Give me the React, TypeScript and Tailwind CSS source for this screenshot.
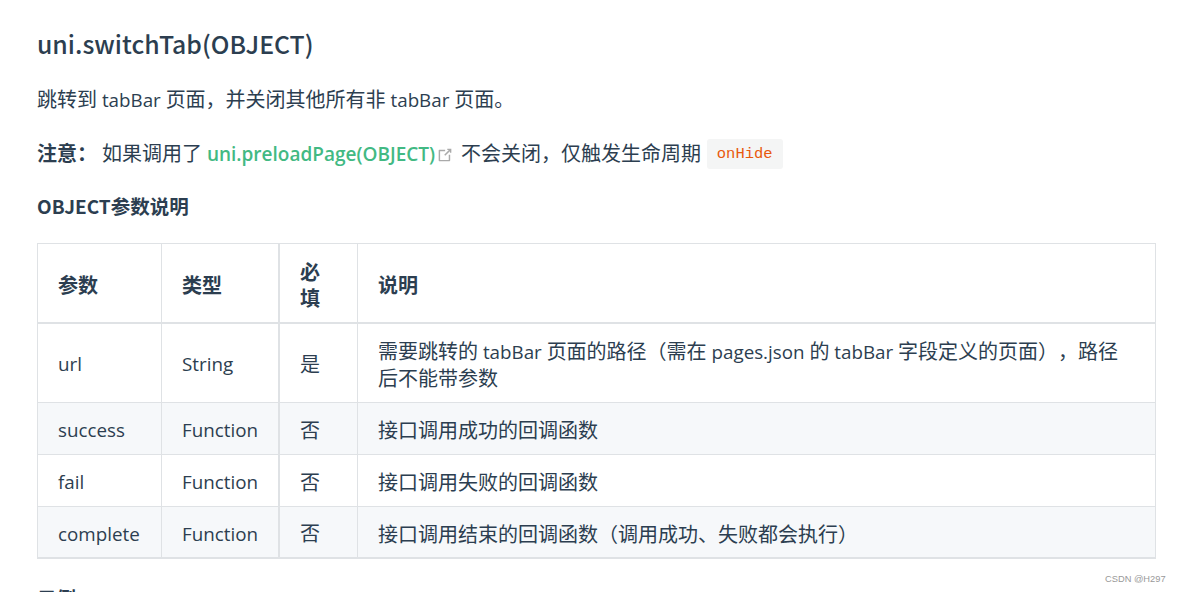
import type { ReactNode } from "react";

const SANS = "font-['Noto_Sans_CJK_SC',sans-serif]";

// latin runs are narrower than the CJK around them in the original
function L({ children }: { children: ReactNode }) {
  return <span className="font-['Open_Sans','Noto_Sans',sans-serif] text-[18.8px] leading-none">{children}</span>;
}

const rows: { name: string; type: string; required: string; desc: ReactNode }[] = [
  {
    name: "url",
    type: "String",
    required: "是",
    desc: (
      <>
        需要跳转的<L> tabBar </L>页面的路径（需在<L> pages.json </L>的<L> tabBar </L>字段定义的页面），路径后不能带参数
      </>
    ),
  },
  { name: "success", type: "Function", required: "否", desc: "接口调用成功的回调函数" },
  { name: "fail", type: "Function", required: "否", desc: "接口调用失败的回调函数" },
  { name: "complete", type: "Function", required: "否", desc: "接口调用结束的回调函数（调用成功、失败都会执行）" },
];

function OutboundIcon() {
  return (
    <svg viewBox="0 0 100 100" className="ml-[1px] mr-[2px] inline-block h-[18px] w-[18px] align-[-3px] text-[#aaaaaa]">
      <path fill="currentColor" d="M18.8,85.1h56l0,0c2.2,0,4-1.8,4-4v-32h-8v28h-48v-48h28v-8h-32l0,0c-2.2,0-4,1.8-4,4v56C14.8,83.3,16.6,85.1,18.8,85.1z" />
      <polygon fill="currentColor" points="45.7,48.7 51.3,54.3 77.2,28.5 77.2,37.2 85.2,37.2 85.2,14.9 62.8,14.9 62.8,22.9 71.5,22.9" />
    </svg>
  );
}

export default function App() {
  return (
    <div className={`relative h-[592px] w-[1181px] overflow-hidden bg-white pl-[37px] pr-[25px] text-[20px] text-[#2c3e50] [text-spacing-trim:space-all] ${SANS}`}>
      <h3 className="mt-[25px] h-[36px] text-[24.8px] leading-[36px] font-medium">uni.switchTab(OBJECT)</h3>
      <p className="mt-[20px] h-[36px] leading-[36px]">
        跳转到<L> tabBar </L>页面，并关闭其他所有非<L> tabBar </L>页面。
      </p>
      <p className="mt-[18px] h-[36px] leading-[36px] whitespace-nowrap">
        <strong className="font-bold">注意：</strong>
        <span className="ml-[5px]">如果调用了</span>
        <L> </L>
        <a className="font-['Open_Sans',sans-serif] text-[19px] font-semibold text-[#42b983]">uni.preloadPage(OBJECT)</a>
        <OutboundIcon />
        <L> </L>不会关闭，仅触发生命周期<L> </L>
        <code className="ml-[1px] inline-block h-[30px] rounded-[3px] bg-[#f4f5f5] px-[10px] align-[3px] font-['Liberation_Mono',monospace] text-[15.5px] leading-[30px] font-normal text-[#e8590c]">onHide</code>
      </p>
      <h4 className="mt-[17px] h-[36px] text-[19.5px] leading-[36px] font-bold">
        <span className="text-[19px]">OBJECT</span>参数说明
      </h4>

      <table className="mt-[19px] w-[1119px] table-fixed border-separate border-spacing-0 border-t border-l border-[#dfe2e5] text-left">
        <colgroup>
          <col className="w-[124px]" />
          <col className="w-[118px]" />
          <col className="w-[78px]" />
          <col />
        </colgroup>
        <thead>
          <tr className="h-[80px]">
            <th className="border-r border-b-2 border-[#dfe2e5] px-5 pt-[3px] font-bold">参数</th>
            <th className="border-r-2 border-b-2 border-[#dfe2e5] px-5 pt-[3px] font-bold">类型</th>
            <th className="border-r border-b-2 border-[#dfe2e5] px-5 pt-[3px] leading-[26px] font-bold">必填</th>
            <th className="border-r border-b-2 border-[#dfe2e5] px-5 pt-[3px] font-bold">说明</th>
          </tr>
        </thead>
        <tbody>
          {rows.map((row, i) => (
            <tr key={row.name} className={i === 0 ? "h-[79px]" : i % 2 === 1 ? "h-[52px] bg-[#f6f8fa]" : "h-[52px]"}>
              <td className={`border-r border-[#dfe2e5] px-5 ${i === 3 ? "border-b-2 pt-[2px]" : "border-b"}`}>
                <L>{row.name}</L>
              </td>
              <td className={`border-r-2 border-[#dfe2e5] px-5 ${i === 3 ? "border-b-2 pt-[2px]" : "border-b"}`}>
                <L>{row.type}</L>
              </td>
              <td className={`border-r border-[#dfe2e5] px-5 pt-[2px] ${i === 3 ? "border-b-2" : "border-b"}`}>{row.required}</td>
              <td className={`border-r border-[#dfe2e5] px-5 pt-[2px] leading-[27px] ${i === 3 ? "border-b-2" : "border-b"}`}>{row.desc}</td>
            </tr>
          ))}
        </tbody>
      </table>

      <h4 className="mt-[21px] h-[36px] text-[19.5px] leading-[36px] font-bold">示例</h4>

      <div className="absolute top-[572px] left-[1105px] font-['Liberation_Sans',sans-serif] text-[9.3px] leading-[14px] text-[#999999]">CSDN @H297</div>
    </div>
  );
}
